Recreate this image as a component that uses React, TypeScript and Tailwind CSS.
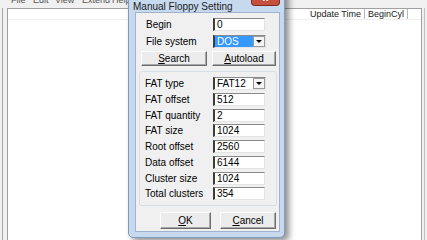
import React from "react";

const font = { fontFamily: '"Liberation Sans", Arial, sans-serif' };

const Field: React.FC<{ value: string }> = ({ value }) => (
  <div className="h-[13px] w-[52px] bg-white border-t border-l-2 border-r border-b border-t-[#8a8a8a] border-l-[#3c3c3c] border-r-[#e4e4e4] border-b-[#e4e4e4] pl-[2px] text-[10px] leading-[11px] text-black">
    {value}
  </div>
);

const Combo: React.FC<{ value: string; selected?: boolean }> = ({ value, selected }) => (
  <div className="h-[13px] w-[53px] flex bg-white border-t border-l-2 border-r border-b border-t-[#8a8a8a] border-l-[#3c3c3c] border-r-[#e4e4e4] border-b-[#e4e4e4]">
    <div
      className={
        selected
          ? "flex-1 bg-[#3399ff] text-white text-[10px] leading-[11px] pl-[2px]"
          : "flex-1 text-black text-[10px] leading-[11px] pl-[2px]"
      }
    >
      {value}
    </div>
    <div className="w-[12px] h-[11px] bg-[#f4f4f4] border border-[#9a9a9a] flex items-center justify-center">
      <div className="w-0 h-0 border-l-[3px] border-r-[3px] border-t-[3px] border-l-transparent border-r-transparent border-t-black" />
    </div>
  </div>
);

const Btn: React.FC<{ k: string; rest: string; className: string }> = ({ k, rest, className }) => (
  <div
    className={
      "flex items-center justify-center bg-[#ececec] border border-t-[#fcfcfc] border-l-[#fcfcfc] border-r-[#6d6d6d] border-b-[#6d6d6d] shadow-[inset_-1px_-1px_0_#a8a8a8] text-[10px] text-black " +
      className
    }
  >
    <span>
      <span className="underline">{k}</span>
      {rest}
    </span>
  </div>
);

const rows: [string, string, boolean][] = [
  ["FAT type", "FAT12", true],
  ["FAT offset", "512", false],
  ["FAT quantity", "2", false],
  ["FAT size", "1024", false],
  ["Root offset", "2560", false],
  ["Data offset", "6144", false],
  ["Cluster size", "1024", false],
  ["Total clusters", "354", false],
];

const menu: [string, string][] = [
  ["File", "w-[22px]"],
  ["Edit", "w-[22px]"],
  ["View", "w-[27px]"],
  ["Extend", "w-[30px]"],
  ["Help", "w-[20px]"],
];

export default function App() {
  return (
    <div className="relative w-[427px] h-[240px] overflow-hidden bg-[#f0f0f0]" style={font}>
      {/* main window behind */}
      <div className="flex flex-col h-full">
        <div className="h-[8px] overflow-hidden">
          <div className="flex -mt-[5px] text-[9px] leading-[11px] text-[#555] pl-[11px] whitespace-nowrap">
            {menu.map(([m, w]) => (
              <span key={m} className={"shrink-0 " + w}>
                {m}
              </span>
            ))}
          </div>
        </div>
        <div className="flex flex-1">
          <div className="w-[7px] flex">
            <div className="w-[2px]" />
            <div className="w-[1px] bg-[#a8a8a8]" />
          </div>
          <div className="flex-1 flex flex-col bg-white border-l border-t border-[#a0a0a0]">
            <div className="h-[11px] flex justify-end text-[9px] leading-[11px] text-[#222] border-b border-[#f0f0f0] whitespace-nowrap">
              <div className="pr-[3px]">Update Time</div>
              <div className="w-[1px] bg-[#b8b8b8]" />
              <div className="w-[42px] pl-[3px] shrink-0">BeginCyl</div>
              <div className="w-[1px] bg-[#b8b8b8]" />
              <div className="w-[13px]" />
            </div>
          </div>
          <div className="w-[6px] flex border-l border-[#a0a0a0]">
            <div className="w-[2px]" />
            <div className="w-[1px] bg-[#c0c0c0]" />
          </div>
        </div>
      </div>

      {/* dialog */}
      <div className="absolute left-[128px] top-[-12px] w-[157px] h-[250px] bg-[#c6d9ef] border border-[#7f9cbd] rounded-[5px] shadow-[4px_3px_6px_rgba(0,0,0,0.45)] flex flex-col">
        <div className="h-[23px] relative">
          <div className="absolute left-[4px] top-[12px] text-[10px] leading-[11px] text-[#222]">
            Manual Floppy Setting
          </div>
          <div className="absolute right-[4px] top-0 w-[29px] h-[17px] rounded-b-[4px] bg-[#c7503d] border border-[#7e2b20] border-t-0 flex items-end justify-center text-white text-[10px] font-bold leading-[12px] pb-[1px]">
            x
          </div>
        </div>
        <div className="ml-[6px] mr-[4px] h-[220px] bg-[#f0f0f0] border border-[#9fb4cc] flex flex-col">
          <div className="flex items-center h-[13px] mt-[5px] pl-[10px]">
            <div className="w-[67px] text-[10px] text-black">Begin</div>
            <Field value="0" />
          </div>
          <div className="flex items-center h-[13px] mt-[4px] pl-[10px]">
            <div className="w-[67px] text-[10px] text-black">File system</div>
            <Combo value="DOS" selected />
          </div>
          <div className="flex mt-[3px] pl-[5px] gap-[5px]">
            <Btn k="S" rest="earch" className="w-[66px] h-[15px]" />
            <Btn k="A" rest="utoload" className="w-[64px] h-[15px]" />
          </div>
          <div className="ml-[3px] mt-[5px] w-[138px] h-[135px] border border-[#d5dfe5] rounded-[3px] flex flex-col gap-[2.75px] pt-[5px]">
            {rows.map(([label, value, combo]) => (
              <div key={label} className="flex items-center h-[13px] pl-[5px]">
                <div className="w-[68px] text-[10px] text-black">{label}</div>
                {combo ? <Combo value={value} /> : <Field value={value} />}
              </div>
            ))}
          </div>
          <div className="flex mt-[6px] pl-[24px] gap-[9px]">
            <Btn k="O" rest="K" className="w-[51px] h-[17px]" />
            <Btn k="C" rest="ancel" className="w-[56px] h-[17px]" />
          </div>
        </div>
      </div>
    </div>
  );
}
